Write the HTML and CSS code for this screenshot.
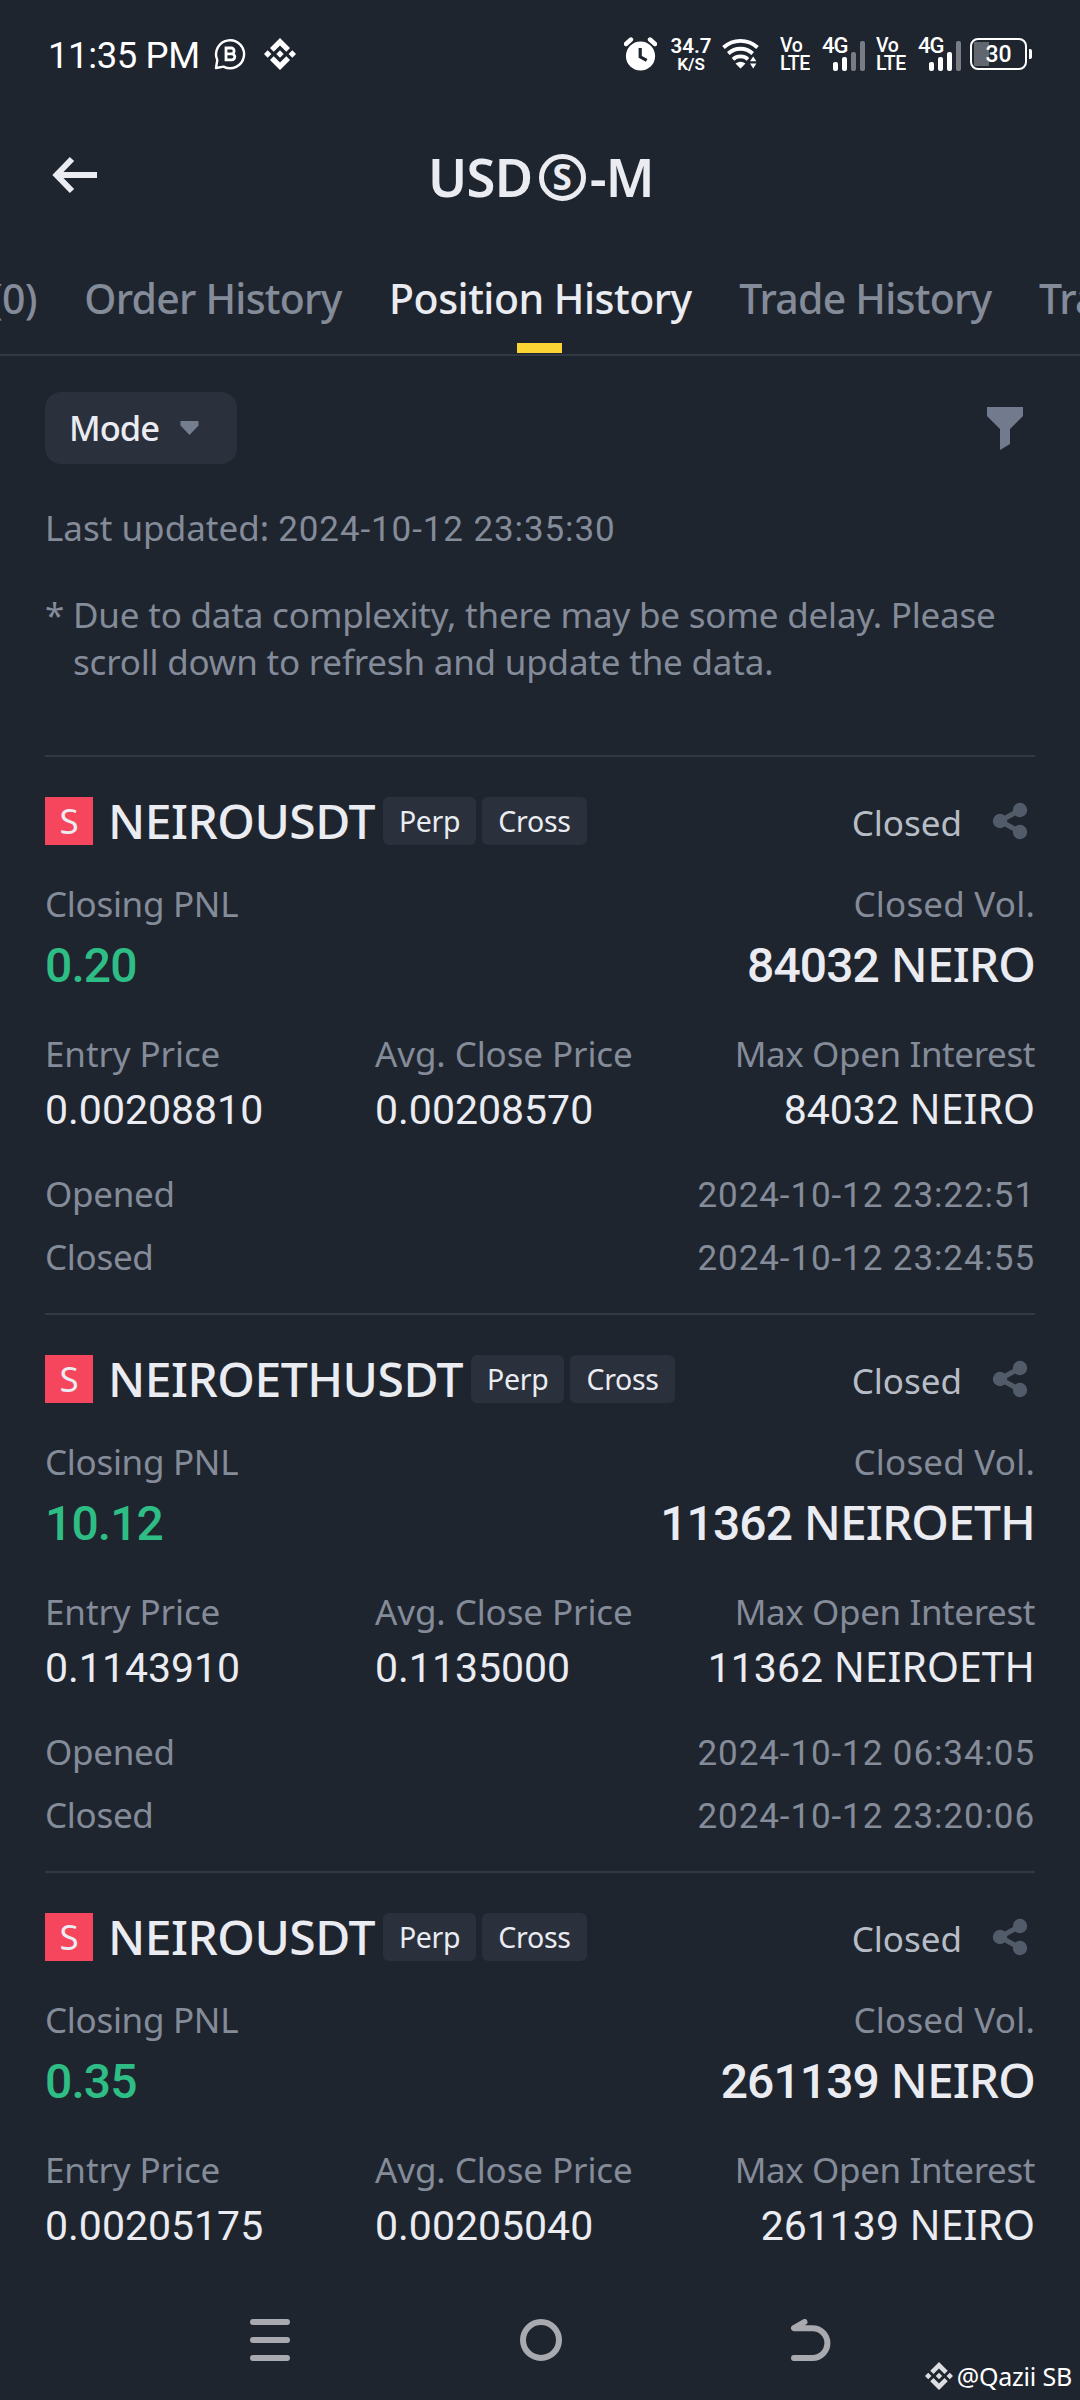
FILE: index.html
```html
<!DOCTYPE html>
<html lang="en">
<head>
<meta charset="utf-8">
<title>Position History</title>
<link rel="stylesheet" href="styles.css">
</head>
<body>
<svg class="defs" aria-hidden="true">
  <symbol id="logo" viewBox="0 0 32 32">
    <path d="M16 0 26 10 22.3 13.7 16 7.4 9.7 13.7 6 10zM16 32 6 22 9.7 18.3 16 24.6 22.3 18.3 26 22zM16 12.3 19.7 16 16 19.7 12.3 16zM3.7 12.3 7.4 16 3.7 19.7 0 16zM28.3 12.3 32 16 28.3 19.7 24.6 16z" fill="currentColor"/>
  </symbol>
  <symbol id="share" viewBox="0 0 36 38">
    <path d="M28 8 8 19 28 30" fill="none" stroke="currentColor" stroke-width="5"/>
    <circle cx="28" cy="8" r="7.2" fill="currentColor"/><circle cx="8" cy="19" r="7.2" fill="currentColor"/><circle cx="28" cy="30" r="7.2" fill="currentColor"/>
  </symbol>
</svg>

<div class="status">
  <div class="status-left">
    <span class="clock">11:35 PM</span>
    <svg class="chat" width="32" height="32" viewBox="0 0 32 32"><path d="M2 30 3.3 22A14 14 0 1 1 9.5 28.6z" fill="none" stroke="#fff" stroke-width="2.4" stroke-linejoin="round"/><path d="M12 10h5.2a2.9 2.9 0 0 1 0 5.8H12zM12 15.8h5.8a3 3 0 0 1 0 6H12z" fill="none" stroke="#fff" stroke-width="2.8"/></svg>
    <svg class="logo" width="32" height="32"><use href="#logo"/></svg>
  </div>
  <div class="status-right">
    <svg class="alarm" width="33" height="34" viewBox="0 0 33 34"><circle cx="16.5" cy="19" r="14.6" fill="#fff"/><path d="M2 7 7 2.5M31 7 26 2.5" stroke="#fff" stroke-width="4.4" stroke-linecap="round"/><path d="M16.2 11v8.8l6.5 3.6" fill="none" stroke="#1f252f" stroke-width="3.2"/></svg>
    <div class="speed"><b>34.7</b><span>K/S</span></div>
    <svg class="wifi" width="38" height="32" viewBox="0 0 38 32"><g fill="none" stroke="#fff" stroke-width="3.8"><path d="M1.5 9.5a25 25 0 0 1 34 0"/><path d="M6.3 15.5a18 18 0 0 1 24.4 0"/><path d="M11 21.3a11.3 11.3 0 0 1 15 0"/></g><path d="M13.5 25.5q5-3.5 10 0L18.5 30.5zM28 23.2 31.2 18.5 34.4 23.2zM28 25.5 31.2 30.5 34.4 25.5z" fill="#fff"/></svg>
    <div class="volte"><span>Vo</span><span>LTE</span></div>
    <div class="signal"><span class="gen">4G</span><i class="bar b1"></i><i class="bar b2"></i><i class="bar b3 dim"></i><i class="bar b4 dim"></i></div>
    <div class="volte second"><span>Vo</span><span>LTE</span></div>
    <div class="signal"><span class="gen">4G</span><i class="bar b1"></i><i class="bar b2"></i><i class="bar b3"></i><i class="bar b4 dim"></i></div>
    <div class="battery"><span>30</span></div><i class="battery-tip"></i>
  </div>
</div>

<header class="header">
  <svg class="back" width="46" height="38" viewBox="0 0 46 38"><path d="M3 19H45M20 3 4.5 19 20 35" fill="none" stroke="#eaecf2" stroke-width="6"/></svg>
  <h1 class="title">USD<span class="coin">S</span>-M</h1>
</header>

<nav class="tabs">
  <span class="tab tab-first">(0)</span>
  <span class="tab">Order History</span>
  <span class="tab active">Position History</span>
  <span class="tab">Trade History</span>
  <span class="tab">Transaction History</span>
</nav>

<main class="content">
  <div class="filters">
    <button class="mode">Mode<svg width="19" height="14" viewBox="0 0 19 14"><path d="M.5 0h18v4.5L9.5 14 .5 4.5z" fill="#757e8f"/></svg></button>
    <svg class="funnel" width="36" height="43" viewBox="0 0 36 43"><path d="M0 0h36v9L23 22v15l-10 6V22L0 9z" fill="#727b8d"/></svg>
  </div>
  <p class="updated">Last updated: <span class="num">2024-10-12 23:35:30</span></p>
  <div class="note"><span class="star">*</span><p>Due to data complexity, there may be some delay. Please<br>scroll down to refresh and update the data.</p></div>

  <section class="card">
    <div class="head"><span class="side">S</span><h2 class="symbol">NEIROUSDT</h2><span class="chip">Perp</span><span class="chip">Cross</span><span class="state">Closed</span><svg class="share" width="36" height="38"><use href="#share"/></svg></div>
    <div class="pair label"><span>Closing PNL</span><span class="vol">Closed Vol.</span></div>
    <div class="pair big"><span class="num gain">0.20</span><span><span class="num">84032</span> NEIRO</span></div>
    <div class="trio label"><span>Entry Price</span><span>Avg. Close Price</span><span>Max Open Interest</span></div>
    <div class="trio value"><span class="num">0.00208810</span><span class="num">0.00208570</span><span><span class="num">84032</span> NEIRO</span></div>
    <div class="pair label opened"><span>Opened</span><span class="num">2024-10-12 23:22:51</span></div>
    <div class="pair label closed"><span>Closed</span><span class="num">2024-10-12 23:24:55</span></div>
  </section>

  <section class="card">
    <div class="head"><span class="side">S</span><h2 class="symbol">NEIROETHUSDT</h2><span class="chip">Perp</span><span class="chip">Cross</span><span class="state">Closed</span><svg class="share" width="36" height="38"><use href="#share"/></svg></div>
    <div class="pair label"><span>Closing PNL</span><span class="vol">Closed Vol.</span></div>
    <div class="pair big"><span class="num gain">10.12</span><span><span class="num">11362</span> NEIROETH</span></div>
    <div class="trio label"><span>Entry Price</span><span>Avg. Close Price</span><span>Max Open Interest</span></div>
    <div class="trio value"><span class="num">0.1143910</span><span class="num">0.1135000</span><span><span class="num">11362</span> NEIROETH</span></div>
    <div class="pair label opened"><span>Opened</span><span class="num">2024-10-12 06:34:05</span></div>
    <div class="pair label closed"><span>Closed</span><span class="num">2024-10-12 23:20:06</span></div>
  </section>

  <section class="card">
    <div class="head"><span class="side">S</span><h2 class="symbol">NEIROUSDT</h2><span class="chip">Perp</span><span class="chip">Cross</span><span class="state">Closed</span><svg class="share" width="36" height="38"><use href="#share"/></svg></div>
    <div class="pair label"><span>Closing PNL</span><span class="vol">Closed Vol.</span></div>
    <div class="pair big"><span class="num gain">0.35</span><span><span class="num">261139</span> NEIRO</span></div>
    <div class="trio label"><span>Entry Price</span><span>Avg. Close Price</span><span>Max Open Interest</span></div>
    <div class="trio value"><span class="num">0.00205175</span><span class="num">0.00205040</span><span><span class="num">261139</span> NEIRO</span></div>
  </section>
</main>

<footer class="navbar">
  <svg width="40" height="42" viewBox="0 0 40 42"><path d="M3 3H37M3 21H37M3 39H37" stroke="#a9aab0" stroke-width="6" stroke-linecap="round"/></svg>
  <svg width="42" height="42" viewBox="0 0 42 42"><circle cx="21" cy="21" r="18" fill="none" stroke="#a9aab0" stroke-width="6"/></svg>
  <svg width="40" height="42" viewBox="0 0 40 42"><path d="M13.5 3 3 9.200H21.500A14.900 14.900 0 0 1 21.500 39H3" fill="none" stroke="#a9aab0" stroke-width="6" stroke-linecap="round" stroke-linejoin="round"/></svg>
</footer>
<div class="watermark"><svg width="28" height="28"><use href="#logo"/></svg>@Qazii SB</div>
</body>
</html>
```
FILE: styles.css
```css
* { box-sizing: border-box; margin: 0; padding: 0; }

body {
  position: relative;
  display: flex;
  flex-direction: column;
  width: 1080px;
  height: 2400px;
  overflow: hidden;
  background: #1f252f;
  color: #eaecf2;
  font-family: "Noto Sans", sans-serif;
}

svg { display: block; flex: none; }
.defs { position: absolute; width: 0; height: 0; }
.num { font-family: Roboto, sans-serif; line-height: 1; }

/* status bar */
.status {
  display: flex;
  justify-content: space-between;
  align-items: center;
  height: 108px;
  padding: 0 48px 0 48px;
  color: #fff;
  font-family: Roboto, sans-serif;
}
.status-left, .status-right { display: flex; align-items: center; }
.clock { font-size: 36.5px; letter-spacing: -0.4px; padding-top: 2px; }
.chat { margin-left: 14px; }
.logo { margin-left: 18px; }
.alarm { margin-right: 13px; }
.speed { display: flex; flex-direction: column; align-items: center; width: 42px; }
.speed b { font-size: 20.5px; font-weight: 600; line-height: 20px; }
.speed span { font-size: 17px; font-weight: 600; line-height: 17px; }
.wifi { margin-left: 10px; }
.volte { margin-left: 20px; width: 31px; padding-top: 1px; font-size: 19.5px; font-weight: 500; line-height: 18px; letter-spacing: -0.4px; }
.volte span { display: block; }
.volte.second { margin-left: 11px; }
.signal { position: relative; width: 43px; height: 34px; margin-left: 11px; }
.gen { position: absolute; left: 0; top: 0; font-size: 22px; font-weight: 500; line-height: 18px; letter-spacing: -1px; }
.bar { position: absolute; bottom: 0; width: 5px; border-radius: 2px; background: #fff; }
.b1 { left: 11px; height: 9px; }
.b2 { left: 20px; height: 14px; }
.b3 { left: 29px; height: 19px; }
.b4 { left: 38px; height: 30px; }
.bar.dim { background: #797c83; }
.battery {
  width: 57px;
  height: 32px;
  margin-left: 9px;
  border: 2px solid #fff;
  border-radius: 8px;
  background: linear-gradient(#62666f, #62666f) 2px 2px / 15px 24px no-repeat;
  font-size: 23px;
  font-weight: 500;
  line-height: 29px;
  text-align: center;
}
.battery-tip { width: 3px; height: 10px; margin-left: 2px; border-radius: 0 2px 2px 0; background: #fff; }

/* title bar */
.header { display: grid; grid-template-columns: 100px 1fr 100px; align-items: center; height: 144px; padding-bottom: 6px; }
.back { margin: -5px 0 0 52px; }
.title { display: flex; justify-content: center; align-items: center; font-size: 52.5px; font-weight: 600; line-height: 60px; letter-spacing: -0.6px; padding-left: 2px; }
.coin {
  width: 47px;
  height: 47px;
  margin: 0 4px 0 6px;
  border: 5px solid #eaecf2;
  border-radius: 50%;
  font-size: 35px;
  font-weight: 700;
  line-height: 36px;
  letter-spacing: 0;
  text-align: center;
}

/* tabs */
.tabs {
  display: flex;
  gap: 47.5px;
  height: 104px;
  padding-top: 18px;
  overflow: hidden;
  border-bottom: 2px solid #313944;
  color: #848b99;
  font-size: 41px;
  font-weight: 500;
  line-height: 56px;
  letter-spacing: -0.75px;
  white-space: nowrap;
}
.tab { flex: none; }
.tab-first { margin-left: -10px; }
.tab.active { position: relative; color: #eaecf2; letter-spacing: -0.5px; }
.tab.active::after { content: ""; position: absolute; left: 50%; bottom: 1px; width: 45px; height: 10px; margin-left: -23px; background: #fcd535; }

/* list */
.content { flex: 1; min-height: 0; overflow: hidden; padding: 36px 45px 0; }
.filters { display: flex; justify-content: space-between; align-items: center; height: 72px; }
.mode {
  display: flex;
  align-items: center;
  gap: 21px;
  width: 192px;
  height: 72px;
  padding: 0 24px;
  border: 0;
  border-radius: 16px;
  background: #2a303c;
  color: #eaecf2;
  font: 500 34.5px/40px "Noto Sans", sans-serif;
  letter-spacing: -1px;
}
.funnel { margin-right: 12px; }
.updated { margin-top: 44px; color: #848b99; font-size: 35px; line-height: 40px; }
.updated .num { letter-spacing: 0.9px; }
.note { display: flex; height: 164px; margin-top: 43px; color: #848b99; font-size: 35px; line-height: 47px; letter-spacing: -0.2px; white-space: nowrap; }
.star { width: 28px; flex: none; }

.card { height: 558px; padding-top: 40px; border-top: 2px solid #313944; }
.head { display: flex; align-items: center; height: 48px; }
.side { width: 48px; height: 48px; background: #f6465d; font-size: 35px; line-height: 48px; text-align: center; }
.symbol { margin: 0 8px 0 15px; font-size: 48px; font-weight: 500; line-height: 48px; letter-spacing: -0.5px; }
.chip { height: 48px; margin-right: 6px; padding: 0 16px; border-radius: 6px; background: #2a303c; font-size: 28.5px; line-height: 49px; letter-spacing: -0.3px; }
.state { margin-left: auto; padding-top: 3px; color: #b7bdc6; font-size: 35px; line-height: 48px; }
.share { margin: 0 7px 0 30px; color: #525b69; }
.pair { display: flex; justify-content: space-between; align-items: baseline; }
.trio { display: grid; grid-template-columns: 330px 330px 330px; align-items: baseline; white-space: nowrap; }
.trio > :last-child { text-align: right; }
.label { height: 40px; margin-top: 39px; color: #848b99; font-size: 35px; line-height: 40px; letter-spacing: -0.3px; }
.vol { letter-spacing: 0.2px; }
.big { height: 56px; margin-top: 12px; font-size: 48px; font-weight: 500; line-height: 56px; letter-spacing: -0.9px; }
.gain { color: #2ebd85; }
.trio.label { margin-top: 42px; letter-spacing: -0.1px; }
.trio.label > :last-child { letter-spacing: -0.4px; }
.value { height: 48px; margin-top: 10px; font-size: 41px; line-height: 48px; }
.opened { margin-top: 42px; }
.closed { margin-top: 23px; }
.label > .num { letter-spacing: 0.9px; }

/* system navigation */
.navbar { display: flex; justify-content: space-between; align-items: center; height: 120px; padding: 0 249px 0 250px; }
.watermark {
  position: absolute;
  right: 8px;
  bottom: 8px;
  display: flex;
  align-items: center;
  gap: 4px;
  color: #fff;
  font-size: 25px;
  line-height: 32px;
  letter-spacing: -0.2px;
}
.watermark svg { color: #dcdde0; }
```
